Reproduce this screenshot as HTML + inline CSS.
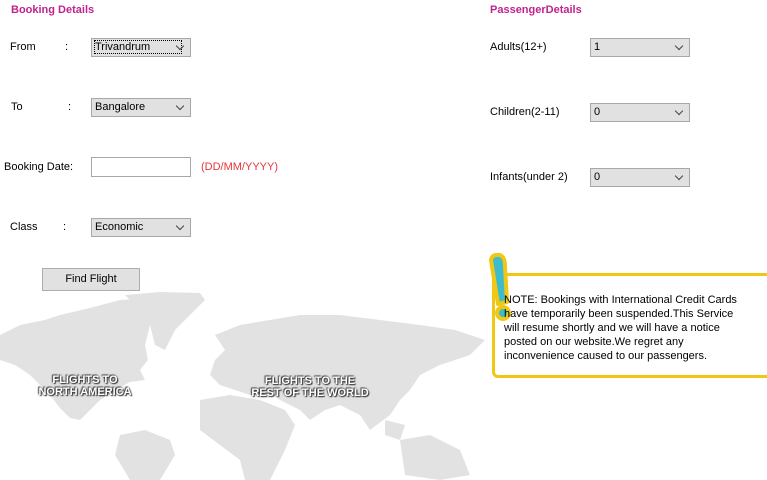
<!DOCTYPE html>
<html><head><meta charset="utf-8"><style>
body{margin:0;width:767px;height:480px;position:relative;overflow:hidden;background:#fff;font-family:"Liberation Sans",sans-serif;font-size:11px;color:#000}
.a{position:absolute;white-space:nowrap}
.h{color:#c0238f;font-weight:bold;font-size:11px}
.sel{position:absolute;width:100px;height:19px;border:1px solid #a8a8a8;background:#e1e1e1;box-sizing:border-box;font-size:11px;line-height:17px;padding-left:3px}
.sel:after{content:"";position:absolute;right:7px;top:4px;width:5px;height:5px;border-right:1px solid #444;border-bottom:1px solid #444;transform:rotate(45deg)}
.mt{position:absolute;color:#fff;font-weight:bold;font-size:11px;text-align:center;line-height:12px;text-shadow:0 0 2px #333,1px 1px 1px #333,-1px -1px 1px #555}
</style></head><body>
<svg class="a" style="left:0;top:290px" width="490" height="190" viewBox="0 0 490 190">
<g fill="#e2e2e2">
<path d="M0,45 L20,35 L45,30 L60,25 L90,18 L120,10 L150,8 L160,20 L150,35 L145,55 L148,70 L140,80 L145,90 L130,92 L115,100 L100,110 L90,120 L80,130 L70,128 L60,118 L50,105 L40,95 L30,85 L15,75 L0,70Z"/>
<path d="M125,5 L160,2 L200,3 L205,10 L190,25 L175,40 L165,60 L155,55 L150,35 L140,20Z"/>
<path d="M120,145 L145,140 L170,150 L175,165 L160,190 L130,190 L115,165Z"/>
<path d="M215,45 L240,35 L270,30 L300,25 L340,25 L380,30 L420,35 L455,40 L485,50 L470,65 L440,75 L420,85 L410,100 L400,110 L390,125 L370,140 L360,125 L340,115 L325,120 L310,130 L300,120 L280,110 L265,100 L250,105 L235,100 L220,95 L210,85 L215,70 L225,60Z"/>
<path d="M200,110 L230,105 L260,110 L285,120 L295,135 L285,160 L270,190 L245,190 L240,170 L220,155 L200,140Z"/>
<path d="M400,150 L430,145 L460,160 L470,185 L440,190 L405,185Z"/>
<path d="M385,130 L405,135 L400,150 L385,145Z"/>
</g></svg>
<div class="mt" style="left:30px;top:374px;width:110px">FLIGHTS TO<br>NORTH AMERICA</div>
<div class="mt" style="left:245px;top:375px;width:130px">FLIGHTS TO THE<br>REST OF THE WORLD</div>

<div class="a h" style="left:11px;top:4px">Booking Details</div>
<div class="a" style="left:10px;top:41px">From</div><div class="a" style="left:65px;top:41px">:</div>
<div class="sel" style="left:91px;top:38px"><span style="outline:1px dotted #000">Trivandrum&nbsp;&nbsp;&nbsp;&nbsp;&nbsp;&nbsp;&nbsp;&nbsp;&nbsp;&nbsp;</span></div>
<div class="a" style="left:11px;top:101px">To</div><div class="a" style="left:68px;top:101px">:</div>
<div class="sel" style="left:91px;top:98px">Bangalore</div>
<div class="a" style="left:4px;top:161px">Booking Date:</div>
<div class="a" style="left:91px;top:157px;width:100px;height:20px;border:1px solid #a8a8a8;box-sizing:border-box;background:#fff"></div>
<div class="a" style="left:201px;top:161px;color:#e8343a">(DD/MM/YYYY)</div>
<div class="a" style="left:10px;top:221px">Class</div><div class="a" style="left:63px;top:221px">:</div>
<div class="sel" style="left:91px;top:218px">Economic</div>
<div class="a" style="left:42px;top:268px;width:98px;height:23px;border:1px solid #adadad;background:#e1e1e1;box-sizing:border-box;text-align:center;line-height:21px">Find Flight</div>

<div class="a h" style="left:490px;top:4px">PassengerDetails</div>
<div class="a" style="left:490px;top:41px">Adults(12+)</div>
<div class="sel" style="left:590px;top:38px">1</div>
<div class="a" style="left:490px;top:106px">Children(2-11)</div>
<div class="sel" style="left:590px;top:103px">0</div>
<div class="a" style="left:490px;top:171px">Infants(under 2)</div>
<div class="sel" style="left:590px;top:168px">0</div>

<div class="a" style="left:492px;top:273px;width:280px;height:105px;border:3px solid #f0c814;border-radius:6px;box-sizing:border-box;background:#fff"></div>
<svg class="a" style="left:488px;top:252px" width="30" height="75"><path d="M3,8 Q4,2 12,3 Q17,5 17,14 L19,50 L10,52 Z" fill="#3cbccc" stroke="#f0c814" stroke-width="4" stroke-linejoin="round"/><circle cx="15" cy="61" r="6" fill="#3cbccc" stroke="#f0c814" stroke-width="4"/></svg>
<div class="a" style="left:504px;top:293px;line-height:14px;font-size:11px">NOTE: Bookings with International Credit Cards<br>have temporarily been suspended.This Service<br>will resume shortly and we will have a notice<br>posted on our website.We regret any<br>inconvenience caused to our passengers.</div>
</body></html>
